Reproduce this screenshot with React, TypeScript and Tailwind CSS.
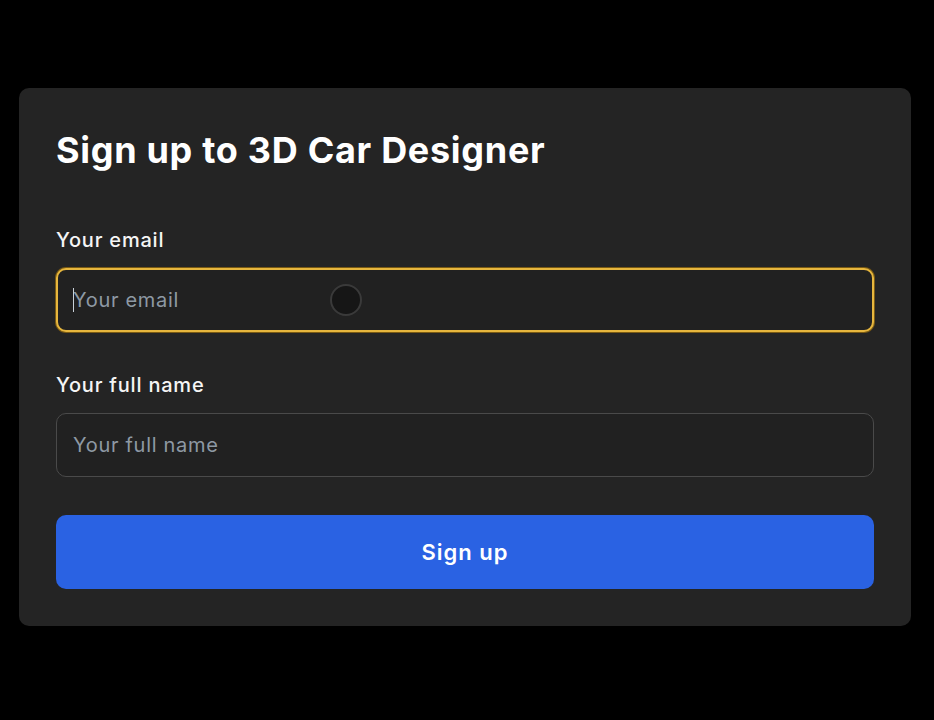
export default function App() {
  return (
    <div className="min-h-screen bg-black pt-[88px] pb-[94px] pl-[19px] font-['Inter','Liberation_Sans',sans-serif]">
      <div className="w-[892px] rounded-[10px] bg-[#242424] px-[37px] pt-[42px] pb-[37px]">
        <h1 className="text-[36px] leading-[40px] font-bold tracking-[0.7px] text-white">
          Sign up to 3D Car Designer
        </h1>

        <form className="mt-[56px] flex flex-col" onSubmit={(e) => e.preventDefault()}>
          <div className="flex flex-col gap-[14px]">
            <label className="text-[20px] leading-[28px] font-medium tracking-[0.8px] text-[#f5f5f5]">
              Your email
            </label>
            <div className="relative">
              <input
                type="email"
                placeholder="Your email"
                className="h-[64px] w-full rounded-[10px] border-2 border-[#e6b63e] bg-[#212121] px-[15px] text-[20px] tracking-[0.7px] text-white outline-none shadow-[0_0_0_1px_#7a5a14] placeholder:text-[#8e99a4]"
              />
              {/* caret */}
              <span className="absolute left-[17px] top-[20px] h-[24px] w-px bg-[#c9d1d9]" />
              {/* pointer ring */}
              <span className="absolute left-[274px] top-[16px] h-[32px] w-[32px] rounded-full border-2 border-[#3a3a3a] bg-[#161616]" />
            </div>
          </div>

          <div className="mt-[39px] flex flex-col gap-[14px]">
            <label className="text-[20px] leading-[28px] font-medium tracking-[0.8px] text-[#f5f5f5]">
              Your full name
            </label>
            <input
              type="text"
              placeholder="Your full name"
              className="h-[64px] w-full rounded-[10px] border border-[#4a4a4a] bg-[#212121] px-[16px] text-[20px] tracking-[0.7px] text-white outline-none placeholder:text-[#8e99a4]"
            />
          </div>

          <button
            type="submit"
            className="mt-[38px] h-[74px] w-full rounded-[10px] bg-[#2a62e3] text-[22px] font-semibold tracking-[1px] text-white"
          >
            Sign up
          </button>
        </form>
      </div>
    </div>
  );
}
